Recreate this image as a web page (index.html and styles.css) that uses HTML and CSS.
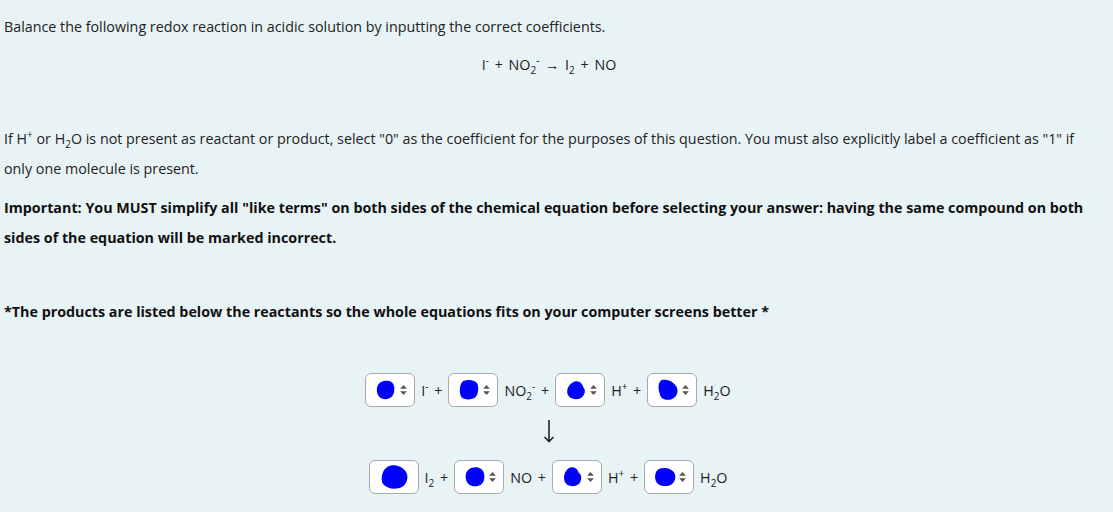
FILE: index.html
```html
<!DOCTYPE html>
<html>
<head>
<meta charset="utf-8">
<link rel="stylesheet" href="styles.css">
</head>
<body>
<div class="page">
  <p class="line intro">Balance the following redox reaction in acidic solution by inputting the correct coefficients.</p>
  <p class="line equation">I<sup>-</sup> + NO<sub>2</sub><sup>-</sup> → I<sub>2</sub> + NO</p>
  <p class="line para">If H<sup>+</sup> or H<sub>2</sub>O is not present as reactant or product, select "0" as the coefficient for the purposes of this question. You must also explicitly label a coefficient as "1" if only one molecule is present.</p>
  <p class="line para bold">Important: You MUST simplify all "like terms" on both sides of the chemical equation before selecting your answer: having the same compound on both sides of the equation will be marked incorrect.</p>
  <p class="line note bold">*The products are listed below the reactants so the whole equations fits on your computer screens better *</p>

  <div class="reaction">
    <div class="row">
      <span class="sel"><svg class="blob" viewBox="0 0 24 24"><path d="M12 2 C18 1 22 6 21 12 C21 18 17 22 11 22 C6 22 2 18 2 12 C2 6 6 2 12 2Z"/></svg><svg class="arr" viewBox="0 0 8 12"><path d="M4 0 L8 4.5 L0 4.5Z M0 7.5 L8 7.5 L4 12Z"/></svg></span>
      <span class="sp">I<sup>-</sup> +</span>
      <span class="sel"><svg class="blob" viewBox="0 0 24 24"><path d="M6 2 C11 0 19 1 21 5 C23 10 22 17 19 20 C15 23 7 23 4 20 C1 16 1 6 6 2Z"/></svg><svg class="arr" viewBox="0 0 8 12"><path d="M4 0 L8 4.5 L0 4.5Z M0 7.5 L8 7.5 L4 12Z"/></svg></span>
      <span class="sp">NO<sub>2</sub><sup>-</sup> +</span>
      <span class="sel"><svg class="blob" viewBox="0 0 24 24"><path d="M10 3 C15 1 19 5 20 9 C23 12 22 18 17 21 C12 23 5 22 3 17 C1 12 4 5 10 3Z"/></svg><svg class="arr" viewBox="0 0 8 12"><path d="M4 0 L8 4.5 L0 4.5Z M0 7.5 L8 7.5 L4 12Z"/></svg></span>
      <span class="sp">H<sup>+</sup> +</span>
      <span class="sel"><svg class="blob" viewBox="0 0 24 24"><path d="M5 1 C12 0 18 3 21 8 C24 13 22 20 16 22 C10 24 4 22 3 16 C1 10 1 4 5 1Z"/></svg><svg class="arr" viewBox="0 0 8 12"><path d="M4 0 L8 4.5 L0 4.5Z M0 7.5 L8 7.5 L4 12Z"/></svg></span>
      <span class="sp">H<sub>2</sub>O</span>
    </div>
    <div class="down"><svg viewBox="0 0 12 24"><path d="M6 1 V22.5 M1.5 18 L6 22.5 L10.5 18"/></svg></div>
    <div class="row">
      <span class="sel wide"><svg class="blob big" viewBox="0 0 28 24"><path d="M9 1 C15 -1 23 2 26 7 C29 12 27 19 22 22 C16 25 7 24 3 19 C0 14 2 4 9 1Z"/></svg></span>
      <span class="sp">I<sub>2</sub> +</span>
      <span class="sel"><svg class="blob" viewBox="0 0 24 24"><path d="M9 2 C15 0 21 3 22 9 C23 15 21 21 14 22 C8 23 3 20 2 14 C1 8 4 3 9 2Z"/></svg><svg class="arr" viewBox="0 0 8 12"><path d="M4 0 L8 4.5 L0 4.5Z M0 7.5 L8 7.5 L4 12Z"/></svg></span>
      <span class="sp">NO +</span>
      <span class="sel"><svg class="blob" viewBox="0 0 24 24"><path d="M8 2 C13 0 17 3 18 7 C22 9 22 16 18 20 C13 24 5 22 3 17 C1 12 3 5 8 2Z"/></svg><svg class="arr" viewBox="0 0 8 12"><path d="M4 0 L8 4.5 L0 4.5Z M0 7.5 L8 7.5 L4 12Z"/></svg></span>
      <span class="sp">H<sup>+</sup> +</span>
      <span class="sel"><svg class="blob" viewBox="0 0 26 24"><path d="M7 2 C13 0 21 2 24 7 C27 13 24 20 18 22 C12 24 4 22 2 16 C0 10 2 4 7 2Z"/></svg><svg class="arr" viewBox="0 0 8 12"><path d="M4 0 L8 4.5 L0 4.5Z M0 7.5 L8 7.5 L4 12Z"/></svg></span>
      <span class="sp">H<sub>2</sub>O</span>
    </div>
  </div>
</div>
</body>
</html>
```

FILE: styles.css
```css
html, body {
  margin: 0;
  padding: 0;
  background: #e8f3f6;
}
body {
  font-family: "Open Sans", "Noto Sans", sans-serif;
  font-size: 14.3px;
  color: #222;
}
.page {
  width: 1090px;
  margin-left: 4px;
  padding-top: 12px;
}
.line {
  margin: 0;
  line-height: 30px;
}
sup, sub {
  font-size: 10px;
  line-height: 0;
}
.equation {
  margin-top: 8px;
  text-align: center;
  word-spacing: 2px;
}
.para {
  margin-top: 44px;
}
.para.bold {
  margin-top: 9px;
}
.bold {
  font-weight: 700;
  color: #111;
}
.note {
  margin-top: 44px;
}
.reaction {
  margin-top: 46px;
  display: flex;
  flex-direction: column;
  align-items: center;
}
.row {
  display: flex;
  align-items: center;
  gap: 4px;
}
.sel {
  box-sizing: border-box;
  width: 50px;
  height: 34px;
  background: #fff;
  border: 1px solid #a9a9a9;
  border-radius: 6px;
  display: flex;
  align-items: center;
  padding-left: 9px;
  gap: 3px;
}
.sel.wide {
  padding-left: 10px;
}
.blob {
  width: 22px;
  height: 22px;
  fill: #0000ff;
}
.blob.big {
  width: 28px;
  height: 24px;
}
.arr {
  width: 7px;
  height: 10px;
  fill: #555;
}
.sp {
  white-space: nowrap;
  padding: 0 2px;
  word-spacing: 2px;
}
.down {
  display: flex;
  margin: 12px 0 17px;
  height: 24px;
}
.down svg {
  width: 12px;
  height: 24px;
  fill: none;
  stroke: #222;
  stroke-width: 1.6;
}
```
